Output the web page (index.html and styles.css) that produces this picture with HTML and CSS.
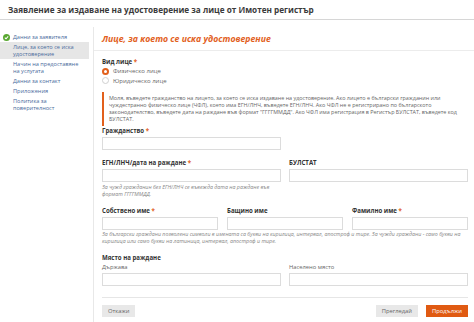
FILE: index.html
```html
<!DOCTYPE html>
<html lang="bg">
<head>
<meta charset="utf-8">
<link rel="stylesheet" href="styles.css">
</head>
<body>
<header class="top">
  <h1 class="title">Заявление за издаване на удостоверение за лице от Имотен регистър</h1>
</header>
<div class="layout">
  <nav class="side">
    <a class="nav-item done"><span class="check"><svg width="7" height="7" viewBox="0 0 10 10"><circle cx="5" cy="5" r="5" fill="#5aa832"/><path d="M2.6 5.2 L4.3 6.8 L7.4 3.4" stroke="#fff" stroke-width="1.5" fill="none"/></svg></span>Данни за заявителя</a>
    <a class="nav-item active">Лице, за което се иска удостоверение</a>
    <a class="nav-item">Начин на предоставяне на услугата</a>
    <a class="nav-item">Данни за контакт</a>
    <a class="nav-item">Приложения</a>
    <a class="nav-item">Политика за поверителност</a>
  </nav>
  <main class="panel">
    <div class="panel-head">Лице, за което се иска удостоверение</div>
    <div class="panel-body">
      <div class="lbl">Вид лице <span class="req">*</span></div>
      <div class="radios">
        <label class="radio"><span class="dot on"></span>Физическо лице</label>
        <label class="radio"><span class="dot"></span>Юридическо лице</label>
      </div>
      <div class="info">Моля, въведете гражданство на лицето, за което се иска издаване на удостоверение. Ако лицето е български гражданин или чуждестранно физическо лице (ЧФЛ), което има ЕГН/ЛНЧ, въведете ЕГН/ЛНЧ. Ако ЧФЛ не е регистрирано по българското законодателство, въведете дата на раждане във формат "ГГГГММДД". Ако ЧФЛ има регистрация в Регистър БУЛСТАТ, въведете код БУЛСТАТ.</div>

      <div class="row two">
        <div class="field">
          <div class="lbl">Гражданство <span class="req">*</span></div>
          <div class="input"></div>
        </div>
      </div>

      <div class="row two gap-top">
        <div class="field">
          <div class="lbl">ЕГН/ЛНЧ/дата на раждане <span class="req">*</span></div>
          <div class="input"></div>
          <div class="hint">За чужд гражданин без ЕГН/ЛНЧ се въвежда дата на раждане във формат ГГГГММДД.</div>
        </div>
        <div class="field">
          <div class="lbl">БУЛСТАТ</div>
          <div class="input"></div>
        </div>
      </div>

      <div class="row three gap-top">
        <div class="field">
          <div class="lbl">Собствено име <span class="req">*</span></div>
          <div class="input"></div>
        </div>
        <div class="field">
          <div class="lbl">Бащино име</div>
          <div class="input"></div>
        </div>
        <div class="field">
          <div class="lbl">Фамилно име <span class="req">*</span></div>
          <div class="input"></div>
        </div>
      </div>
      <div class="hint wide">За български граждани позволени символи в имената са букви на кирилица, интервал, апостроф и тире. За чужди граждани - само букви на кирилица или само букви на латиница, интервал, апостроф и тире.</div>

      <div class="lbl section">Място на раждане</div>
      <div class="row two">
        <div class="field">
          <div class="sublbl">Държава</div>
          <div class="input"></div>
        </div>
        <div class="field">
          <div class="sublbl">Населено място</div>
          <div class="input"></div>
        </div>
      </div>
    </div>
    <div class="actions">
      <button class="btn">Откажи</button>
      <span class="spacer"></span>
      <button class="btn">Прегледай</button>
      <button class="btn primary">Продължи</button>
    </div>
  </main>
</div>
</body>
</html>
```

FILE: styles.css
```css
* { box-sizing: border-box; }
html, body { margin: 0; padding: 0; background: #fff; }
body {
  width: 474px;
  height: 322px;
  overflow: hidden;
  font-family: "Open Sans", "Noto Sans", sans-serif;
  color: #333;
}
.top {
  height: 20px;
  border-bottom: 1px solid #d6d6d6;
  padding: 0 8px;
  display: flex;
  align-items: center;
}
.title {
  margin: 0;
  font-size: 8.2px;
  font-weight: 700;
  color: #3a3a3a;
  white-space: nowrap;
}
.layout {
  display: flex;
  padding-top: 7px;
  height: 302px;
}
.side {
  width: 89px;
  margin-right: 4px;
  flex: none;
  display: flex;
  flex-direction: column;
  padding-top: 5.2px;
}
.nav-item {
  display: block;
  font-size: 5.6px;
  line-height: 6.8px;
  color: #4a6b9c;
  padding: 1.7px 6px 1.7px 13px;
  position: relative;
}
.nav-item .check {
  position: absolute;
  left: 3px;
  top: 1.9px;
  width: 7px;
  height: 7px;
  display: flex;
}
.nav-item.active {
  background: #e6e6e6;
}
.panel {
  flex: 1;
  border-left: 1px solid #e8e8e8;
  display: flex;
  flex-direction: column;
}
.panel-head {
  height: 24px;
  padding: 0 8px;
  display: flex;
  align-items: center;
  font-size: 8.7px;
  font-weight: 700;
  font-style: italic;
  color: #e2601c;
  border-bottom: 1px solid #ececec;
}
.panel-body {
  padding: 6px 6px 0 8px;
}
.lbl {
  font-size: 6.1px;
  font-weight: 700;
  color: #333;
  line-height: 9px;
}
.req { color: #e2601c; }
.radios {
  display: flex;
  flex-direction: column;
  gap: 1.5px;
  margin-top: 1px;
}
.radio {
  display: flex;
  align-items: center;
  font-size: 6px;
  color: #666;
  height: 8px;
}
.dot {
  width: 7px;
  height: 7px;
  border-radius: 50%;
  border: 1px solid #d0d0d0;
  margin-right: 4px;
  background: #fff;
  flex: none;
}
.dot.on {
  border: 2px solid #e2601c;
}
.info {
  margin-top: 7px;
  border-left: 2px solid #e2601c;
  padding: 3px 2px 2.5px 5px;
  font-size: 5.4px;
  line-height: 7.3px;
  color: #666;
}
.row {
  display: grid;
  column-gap: 8px;
}
.row.two { grid-template-columns: 1fr 1fr; }
.row.three { grid-template-columns: 1fr 1fr 1fr; column-gap: 9px; }
.gap-top { margin-top: 8.5px; }
.field .lbl { margin-bottom: 1.5px; }
.input {
  height: 13px;
  border: 1px solid #dcdcdc;
  background: #fff;
}
.hint {
  font-size: 5.3px;
  font-style: italic;
  color: #888;
  line-height: 7px;
  margin-top: 2px;
}
.hint.wide { margin-top: 1px; padding-right: 6px; }
.section { margin-top: 8px; }
.sublbl {
  font-size: 5.8px;
  color: #666;
  line-height: 9px;
  margin: 1px 0 1.5px;
}
.actions {
  margin: 11px 6px 0 8px;
  border-top: 1px solid #e6e6e6;
  padding-top: 7px;
  display: flex;
  gap: 8px;
}
.spacer { flex: 1; }
.btn {
  font-family: inherit;
  font-size: 5.8px;
  height: 12px;
  border: none;
  background: #e8e8e8;
  color: #666;
  padding: 0 6px;
}
.btn.primary {
  background: #e05a12;
  color: #fff;
  width: 42px;
  padding: 0;
}
```
